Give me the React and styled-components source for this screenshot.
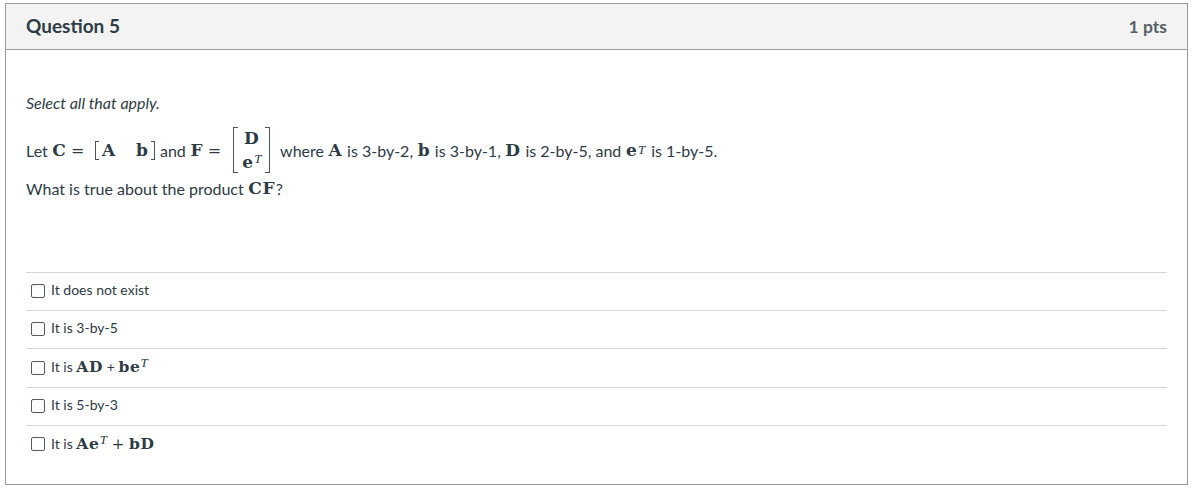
import styled, { createGlobalStyle } from 'styled-components';

const GlobalStyle = createGlobalStyle`
  html, body {
    margin: 0;
    padding: 0;
    background: #fff;
  }
  body {
    font-family: Lato, "Open Sans", sans-serif;
    color: #2d3b45;
  }
`;

const Card = styled.div`
  box-sizing: border-box;
  width: 1183px;
  height: 482px;
  margin: 3px 0 0 5px;
  border: 1px solid #9a9a9a;
  background: #fff;
`;

const Header = styled.div`
  box-sizing: border-box;
  height: 46px;
  display: flex;
  align-items: center;
  justify-content: space-between;
  padding: 0 20px 1px 20px;
  background: #f3f3f3;
  border-bottom: 1px solid #9a9a9a;
`;

const Title = styled.h2`
  margin: 0 0 2px;
  font-size: 19px;
  font-weight: 700;
  color: #2d3b45;
`;

const Points = styled.span`
  font-size: 17.5px;
  font-weight: 700;
  color: #565f66;
`;

const Body = styled.div`
  padding: 42px 20px 0 20px;
`;

const Prompt = styled.p`
  margin: 0;
  font-size: 16px;
  line-height: 22px;
  font-style: italic;
`;

const Line = styled.p`
  margin: ${(p) => p.$top}px 0 0;
  display: flex;
  align-items: center;
  height: ${(p) => p.$height}px;
  font-size: 16px;
  white-space: pre;
`;

const Mb = styled.span`
  font-family: "DejaVu Serif", serif;
  font-weight: 700;
  font-size: ${(p) => p.$size || 17}px;
  letter-spacing: 0.7px;
  margin: 0 ${(p) => (p.$size ? 0 : 0.5)}px;
`;

const Op = styled.span`
  font-family: "DejaVu Serif", serif;
  font-size: 16px;
  margin: 0 ${(p) => p.$after}px 0 4px;
`;

const Sup = styled.sup`
  font-family: "Liberation Serif", serif;
  font-style: italic;
  font-weight: 400;
  font-size: 13px;
  line-height: 0;
  vertical-align: 5px;
  margin-right: ${(p) => p.$right || 0}px;
`;

const RowBracket = styled.span`
  box-sizing: border-box;
  width: 4px;
  height: 19px;
  margin: ${(p) => (p.$right ? '0 5px 0 2px' : '0 3px 0 1px')};
  border: 1px solid #4a555d;
  border-width: ${(p) => (p.$right ? '1px 1px 1px 0' : '1px 0 1px 1px')};
`;

const ColumnGap = styled.span`
  width: 19px;
`;

const Matrix = styled.span`
  display: inline-grid;
  grid-template-columns: 5px 27px 5px;
  height: 46px;
  margin: 0 10px 0 1px;
`;

const MatrixBracket = styled.span`
  box-sizing: border-box;
  height: 46px;
  border: 1px solid #4a555d;
  border-width: ${(p) => (p.$right ? '1px 1px 1px 0' : '1px 0 1px 1px')};
`;

const Cells = styled.span`
  display: flex;
  flex-direction: column;
  align-items: center;
  justify-content: space-between;
  line-height: 22px;
`;

const Answers = styled.ul`
  list-style: none;
  margin: 72px 0 0;
  padding: 0;
`;

const Answer = styled.li`
  box-sizing: border-box;
  height: ${(p) => p.$height || 38}px;
  display: flex;
  align-items: center;
  padding: 0 0 ${(p) => (p.$math ? 3 : 5)}px 5px;
  border-top: 1px solid #d4d6d8;
  font-size: 14px;
  white-space: pre;
`;

const Box = styled.span`
  box-sizing: border-box;
  width: 14px;
  height: 14px;
  flex: none;
  margin: ${(p) => (p.$math ? 2 : 4)}px 6px 0 0;
  border: 1px solid #555b5f;
  border-radius: 2px;
  background: #fff;
`;

const Plus = styled.span`
  font-family: "DejaVu Serif", serif;
  font-size: 15px;
`;

const answers = [
  { id: 1, content: 'It does not exist' },
  { id: 2, content: 'It is 3-by-5' },
  {
    id: 3,
    height: 39,
    math: true,
    content: (
      <>
        It is <Mb $size={15.5}>AD</Mb> + <Mb $size={15.5}>be</Mb>
        <Sup>T</Sup>
      </>
    ),
  },
  { id: 4, content: 'It is 5-by-3' },
  {
    id: 5,
    math: true,
    content: (
      <>
        It is <Mb $size={15.5}>Ae</Mb>
        <Sup>T</Sup>
        <Plus> + </Plus>
        <Mb $size={15.5}>bD</Mb>
      </>
    ),
  },
];

const App = () => {
  return (
    <>
      <GlobalStyle />
      <Card>
        <Header>
          <Title>Question 5</Title>
          <Points>1 pts</Points>
        </Header>
        <Body>
          <Prompt>Select all that apply.</Prompt>
          <Line $top={12} $height={48}>
            Let <Mb>C</Mb>
            <Op $after={9}>=</Op>
            <RowBracket />
            <Mb>A</Mb>
            <ColumnGap />
            <Mb>b</Mb>
            <RowBracket $right />
            and <Mb>F</Mb>
            <Op $after={11}>=</Op>
            <Matrix>
              <MatrixBracket />
              <Cells>
                <Mb>D</Mb>
                <span>
                  <Mb>e</Mb>
                  <Sup>T</Sup>
                </span>
              </Cells>
              <MatrixBracket $right />
            </Matrix>
            where <Mb>A</Mb> is 3-by-2, <Mb>b</Mb> is 3-by-1, <Mb>D</Mb> is 2-by-5, and <Mb>e</Mb>
            <Sup $right={2}>T</Sup> is 1-by-5.
          </Line>
          <Line $top={2} $height={24}>
            What is true about the product <Mb>CF</Mb>?
          </Line>
          <Answers>
            {answers.map((answer) => (
              <Answer key={answer.id} $height={answer.height} $math={answer.math}>
                <Box $math={answer.math} />
                <span>{answer.content}</span>
              </Answer>
            ))}
          </Answers>
        </Body>
      </Card>
    </>
  );
};

export default App;
